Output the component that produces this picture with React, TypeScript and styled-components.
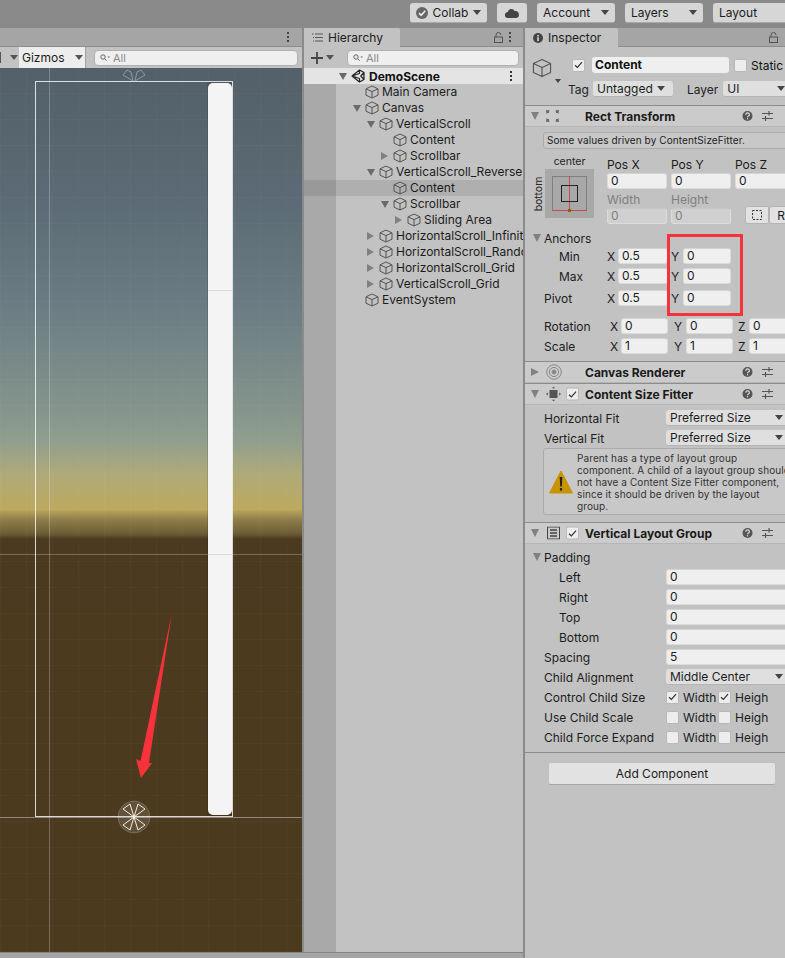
import React from 'react';
import styled, { createGlobalStyle } from 'styled-components';

const GlobalStyle = createGlobalStyle`
  html, body {
    margin: 0;
    padding: 0;
    width: 785px;
    height: 958px;
    overflow: hidden;
    background: #8a8a8a;
  }
  body {
    font-family: Inter, "Noto Sans", "Liberation Sans", sans-serif;
    font-size: 12px;
    color: #111;
  }
`;

const Editor = styled.div`
  width: 785px;
  height: 958px;
  display: flex;
  flex-direction: column;
  overflow: hidden;
`;

const TopBar = styled.div`
  height: 28px;
  flex: none;
  display: flex;
  justify-content: flex-end;
  align-items: flex-start;
  padding-top: 3px;
  box-sizing: border-box;
  gap: 10px;
  margin-right: -14px;
`;

const TopButton = styled.div<{ $w: number; $center?: boolean }>`
  width: ${p => p.$w}px;
  height: 20px;
  box-sizing: border-box;
  background: #d6d6d6;
  border-radius: 3px;
  border-bottom: 1px solid #a8a8a8;
  display: flex;
  align-items: center;
  justify-content: ${p => (p.$center ? 'center' : 'space-between')};
  padding: 0 6px;
  color: #1c1c1c;
`;

const Caret = styled.span<{ $c?: string }>`
  flex: none;
  width: 0;
  height: 0;
  border-left: 4px solid transparent;
  border-right: 4px solid transparent;
  border-top: 5px solid ${p => p.$c || '#444'};
`;

const Docks = styled.div`
  height: 930px;
  flex: none;
  display: flex;
  gap: 2px;
`;

const LeftDock = styled.div`
  width: 523px;
  flex: none;
  display: flex;
  flex-direction: column;
`;

const LeftPanels = styled.div`
  height: 924px;
  flex: none;
  display: flex;
  gap: 2px;
`;

const Panel = styled.div<{ $w: number }>`
  width: ${p => p.$w}px;
  flex: none;
  display: flex;
  flex-direction: column;
  overflow: hidden;
`;

const TabBar = styled.div`
  height: 18px;
  flex: none;
  background: #a5a5a5;
  display: flex;
  align-items: stretch;
  justify-content: flex-end;
  border-bottom: 1px solid #8c8c8c;
`;

const Tab = styled.div<{ $w: number }>`
  width: ${p => p.$w}px;
  height: 19px;
  margin-right: auto;
  background: #c2c2c2;
  display: flex;
  align-items: center;
  gap: 5px;
  padding-left: 8px;
  box-sizing: border-box;
  border-top-right-radius: 2px;
  color: #1c1c1c;
`;

const TabTools = styled.div<{ $r: number }>`
  display: flex;
  align-items: center;
  gap: 6px;
  padding-right: ${p => p.$r}px;
`;

const Dots = styled.span`
  width: 2px;
  height: 2px;
  background: #444;
  box-shadow: 0 -4px 0 #444, 0 4px 0 #444;
`;

const Search = styled.div`
  flex: 1;
  height: 16px;
  background: #efefef;
  border: 1px solid #b0b0b0;
  border-radius: 4px;
  box-sizing: border-box;
  display: flex;
  align-items: center;
  gap: 3px;
  padding-left: 5px;
  color: #8a8a8a;
  font-size: 11px;
`;

const SceneTools = styled.div`
  height: 21px;
  flex: none;
  background: #c2c2c2;
  display: flex;
  align-items: center;
  padding-right: 4px;
`;

const GizmoButton = styled.div`
  margin-left: 19px;
  width: 67px;
  height: 21px;
  box-sizing: border-box;
  background: #ededed;
  border-right: 1px solid #a0a0a0;
  display: flex;
  align-items: center;
  padding: 0 5px 0 3px;
  gap: 5px;
  margin-right: 8px;
  position: relative;
  color: #1c1c1c;
  &::before {
    content: '';
    position: absolute;
    left: -9px;
    top: 8px;
    border-left: 4px solid transparent;
    border-right: 4px solid transparent;
    border-top: 5px solid #555;
  }
  &::after {
    content: '';
    position: absolute;
    left: -19px;
    top: 5px;
    width: 1px;
    height: 11px;
    background: #555;
  }
`;

const GizmoSplit = styled.span`
  width: 1px;
  height: 12px;
  background: #999;
`;

const SceneView = styled.div`
  flex: 1;
  position: relative;
  background:
    repeating-linear-gradient(90deg, rgba(255, 255, 255, 0.025) 0 1px, transparent 1px 26px),
    repeating-linear-gradient(0deg, rgba(255, 255, 255, 0.025) 0 1px, transparent 1px 26px),
    linear-gradient(180deg, #536069 0, #5b6a74 130px, #6a7b83 233px, #82928b 333px, #8f9e8d 373px, #aeaa7a 405px, #bda95f 441px, #8e7c48 452px, #6f5f38 465px, #4c3a20 471px, #4c3a1f 100%);
  overflow: hidden;
`;

const Overlay = styled.svg`
  position: absolute;
  left: 0;
  top: 0;
`;

const Footer = styled.div`
  height: 6px;
  flex: none;
  background: #a5a5a5;
  border-top: 1px solid #858585;
  box-sizing: border-box;
`;

const HierarchyTools = styled.div`
  height: 21px;
  flex: none;
  background: #c2c2c2;
  display: flex;
  align-items: center;
  padding: 0 4px 0 7px;
  gap: 13px;
`;

const PlusButton = styled.div`
  display: flex;
  align-items: center;
  gap: 3px;
`;

const Tree = styled.div`
  flex: 1;
  background: linear-gradient(90deg, #a9a9a9 32px, #c2c2c2 32px);
  overflow: hidden;
`;

const SceneRow = styled.div`
  height: 16px;
  background: #e4e4e4;
  display: flex;
  align-items: center;
  padding-left: 35px;
  gap: 4px;
  font-weight: 700;
  color: #111;
  position: relative;
`;

const SceneDots = styled.span`
  position: absolute;
  right: 11px;
  top: 7px;
  width: 2px;
  height: 2px;
  background: #333;
  box-shadow: 0 -4px 0 #333, 0 4px 0 #333;
`;

const TreeRow = styled.div<{ $depth: number; $selected?: boolean }>`
  height: 16px;
  display: flex;
  align-items: center;
  padding-left: ${p => 61 + p.$depth * 14}px;
  background: ${p => (p.$selected ? 'rgba(0, 0, 0, 0.095)' : 'transparent')};
  white-space: nowrap;
  color: #1c1c1c;
`;

const TreeArrow = styled.span<{ $open?: boolean; $inline?: boolean }>`
  width: ${p => (p.$inline ? 'auto' : '12px')};
  margin-left: ${p => (p.$inline ? '0' : '-12px')};
  flex: none;
  display: flex;
  justify-content: flex-start;
  &::before {
    content: '';
    display: block;
    ${p =>
      p.$open
        ? `border-left: 4px solid transparent; border-right: 4px solid transparent; border-top: 7px solid #6a6a6a;`
        : `border-top: 4px solid transparent; border-bottom: 4px solid transparent; border-left: 7px solid #808080;`}
  }
`;

const TreeLabel = styled.span`
  margin: -2px 0 0 3px;
`;

const Inspector = styled(Panel)`
  background: #c2c2c2;
`;

const InspectorBody = styled.div`
  width: 280px;
  flex: 1;
  display: flex;
  flex-direction: column;
`;

const ObjectHead = styled.div`
  height: 59px;
  flex: none;
  box-sizing: border-box;
  border-bottom: 1px solid #8c8c8c;
  display: flex;
  padding: 10px 0 0 7px;
`;

const ObjectIconWrap = styled.div`
  width: 40px;
  flex: none;
  padding-top: 1px;
  position: relative;
  &::after {
    content: '';
    position: absolute;
    left: 23px;
    top: 22px;
    border-left: 3px solid transparent;
    border-right: 3px solid transparent;
    border-top: 4px solid #444;
  }
`;

const ObjectFields = styled.div`
  display: flex;
  flex-direction: column;
  gap: 8px;
`;

const NameRow = styled.div`
  display: flex;
  align-items: center;
  height: 16px;
`;

const TagRow = styled.div`
  display: flex;
  align-items: center;
  height: 16px;
  margin-left: -4px;
  color: #222;
`;

const LayerLabel = styled.span`
  margin-left: 14px;
`;

const Check = styled.span<{ $gap?: number }>`
  width: 13px;
  height: 13px;
  flex: none;
  box-sizing: border-box;
  background: #ededed;
  border: 1px solid #b8b8b8;
  border-radius: 2px;
  margin-right: ${p => p.$gap ?? 5}px;
  display: flex;
  align-items: center;
  justify-content: center;
`;

const NameField = styled.div`
  width: 137px;
  height: 16px;
  margin: 0 5px 0 3px;
  box-sizing: border-box;
  background: #efefef;
  border-radius: 3px;
  font-weight: 700;
  padding-left: 3px;
  line-height: 16px;
  flex: none;
`;

const Select = styled.div<{ $w: number; $ml?: number }>`
  width: ${p => p.$w}px;
  height: 16px;
  margin-left: ${p => p.$ml ?? 0}px;
  flex: none;
  box-sizing: border-box;
  background: #dfdfdf;
  border-radius: 3px;
  border-bottom: 1px solid #b4b4b4;
  display: flex;
  align-items: center;
  justify-content: space-between;
  padding: 0 8px 0 4px;
  color: #1c1c1c;
`;

const CompHead = styled.div`
  height: 21px;
  flex: none;
  box-sizing: border-box;
  background: #cbcbcb;
  border-bottom: 1px solid #b6b6b6;
  display: flex;
  align-items: center;
  position: relative;
  padding-left: 60px;
  font-weight: 700;
  color: #1a1a1a;
  white-space: nowrap;
`;

const HeadSlot = styled.span<{ $x: number }>`
  position: absolute;
  left: ${p => p.$x}px;
  top: 50%;
  transform: translateY(-50%);
  display: flex;
`;

const FoldArrow = styled.span<{ $open?: boolean }>`
  display: block;
  ${p =>
    p.$open
      ? `border-left: 4.5px solid transparent; border-right: 4.5px solid transparent; border-top: 8px solid #808080;`
      : `border-top: 4.5px solid transparent; border-bottom: 4.5px solid transparent; border-left: 8px solid #808080;`}
`;

const Note = styled.div`
  margin: 5px 0 6px 18px;
  height: 17px;
  box-sizing: border-box;
  border: 1px solid #ababab;
  border-radius: 3px;
  background: #c8c8c8;
  font-size: 10px;
  letter-spacing: 0.1px;
  line-height: 15px;
  padding-left: 3px;
  color: #222;
`;

const PosBlock = styled.div`
  display: flex;
  margin-left: 16px;
  height: 69px;
`;

const AnchorCol = styled.div`
  width: 66px;
  flex: none;
  position: relative;
`;

const AnchorCaption = styled.div`
  width: 57px;
  text-align: center;
  font-size: 10.5px;
  height: 14px;
  line-height: 14px;
  color: #222;
`;

const AnchorBottom = styled.span`
  position: absolute;
  left: -19px;
  top: 33px;
  transform: rotate(-90deg);
  font-size: 10.5px;
  line-height: 12px;
  color: #222;
`;

const AnchorBox = styled.div`
  width: 49px;
  height: 49px;
  margin-left: 4px;
  background: #a8a8a8;
`;

const PosGrid = styled.div`
  display: grid;
  grid-template-columns: repeat(3, 60px);
  column-gap: 4px;
  grid-template-rows: 18px 16px 19px 16px;
`;

const PosLabel = styled.div<{ $off?: boolean }>`
  color: ${p => (p.$off ? '#7f7f7f' : '#1c1c1c')};
  align-self: end;
  line-height: 15px;
  padding-bottom: 1px;
`;

const Field = styled.div<{ $w?: number; $off?: boolean }>`
  ${p => (p.$w ? `width: ${p.$w}px; flex: none;` : '')}
  height: 16px;
  box-sizing: border-box;
  background: ${p => (p.$off ? '#d0d0d0' : '#efefef')};
  color: ${p => (p.$off ? '#7f7f7f' : '#1c1c1c')};
  border-radius: 3px;
  border: 1px solid #dcdcdc;
  border-top-color: ${p => (p.$off ? '#c6c6c6' : '#d4d4d4')};
  line-height: 14px;
  padding-left: 3px;
`;

const RawButtons = styled.div`
  grid-column: 3;
  display: flex;
  margin-top: -2px;
  margin-left: 10px;
  height: 18px;
`;

const RawButton = styled.div<{ $w: number }>`
  width: ${p => p.$w}px;
  flex: none;
  box-sizing: border-box;
  background: #e2e2e2;
  border: 1px solid #b4b4b4;
  border-radius: 3px 0 0 3px;
  display: flex;
  align-items: center;
  justify-content: center;
  color: #1c1c1c;
`;

const FoldRow = styled.div<{ $top: number }>`
  height: 16px;
  display: flex;
  align-items: center;
  margin-top: ${p => p.$top}px;
  padding-left: 8px;
  gap: 3px;
  color: #1c1c1c;
`;

const Row = styled.div<{ $top?: number }>`
  height: 16px;
  display: flex;
  align-items: center;
  padding-left: 19px;
  margin-top: ${p => p.$top ?? 4}px;
  white-space: nowrap;
  color: #1c1c1c;
`;

const RowLabel = styled.span<{ $w: number; $indent?: number }>`
  width: ${p => p.$w}px;
  flex: none;
  padding-left: ${p => p.$indent ?? 0}px;
  box-sizing: border-box;
`;

const Axis = styled.span<{ $w: number; $ml?: number }>`
  width: ${p => p.$w}px;
  margin-left: ${p => p.$ml ?? 0}px;
  flex: none;
`;

const Warning = styled.div`
  margin: 2px 0 7px 18px;
  height: 67px;
  box-sizing: border-box;
  border: 1px solid #ababab;
  border-radius: 3px;
  background: #c8c8c8;
  display: flex;
  align-items: center;
  padding-left: 5px;
  color: #333;
`;

const WarningText = styled.div`
  margin-left: 4px;
  font-size: 10px;
  letter-spacing: 0.1px;
  line-height: 12px;
  white-space: nowrap;
  flex: none;
`;

const CheckLabel = styled.span<{ $w: number }>`
  width: ${p => p.$w}px;
  flex: none;
  margin-left: 4px;
`;

const Divider = styled.div<{ $top: number }>`
  height: 1px;
  margin-top: ${p => p.$top}px;
  width: 260px;
  background: #8c8c8c;
`;

const AddButton = styled.div`
  width: 228px;
  height: 23px;
  margin: 9px 0 0 23px;
  box-sizing: border-box;
  background: #e2e2e2;
  border: 1px solid #c0c0c0;
  border-bottom-color: #a8a8a8;
  border-radius: 3px;
  display: flex;
  align-items: center;
  justify-content: center;
  color: #1c1c1c;
`;

const RedFrame = styled.div`
  position: absolute;
  left: 142px;
  top: 187px;
  width: 76px;
  height: 82px;
  box-sizing: border-box;
  border: 3px solid #f5333a;
  pointer-events: none;
`;

const InspectorStage = styled.div`
  position: relative;
  flex: 1;
  display: flex;
  flex-direction: column;
`;

const IconSvg = styled.svg`
  flex: none;
  display: block;
`;

const CubeIcon = ({ size = 14 }: { size?: number }) => (
  <IconSvg width={size} height={size} viewBox="0 0 14 14" fill="none" stroke="#555" strokeWidth={size > 14 ? 0.8 : 1}>
    <path d="M7 1 L13 3.8 V10.2 L7 13 L1 10.2 V3.8 Z M1 3.8 L7 6.6 L13 3.8 M7 6.6 V13" strokeLinejoin="round" />
  </IconSvg>
);

const UnityIcon = () => (
  <IconSvg width="14" height="14" viewBox="0 0 14 14" fill="none" stroke="#222" strokeWidth="1.2">
    <path d="M8.5 1 L13 3.5 L13 10.5 L8.5 13 L1 7 Z M8.5 1 V4.5 L1 7 M8.5 13 V9.5 L1 7 M13 3.5 L9.8 7 L13 10.5" strokeLinejoin="round" />
  </IconSvg>
);

const CheckMark = () => (
  <svg width="9" height="8" viewBox="0 0 9 8" fill="none" stroke="#333" strokeWidth="1.2">
    <path d="M1 4.2 L3.4 6.5 L8 1.2" />
  </svg>
);

const MagIcon = () => (
  <IconSvg width="10" height="8" viewBox="0 0 10 8" fill="none" stroke="#666" strokeWidth="1">
    <circle cx="3" cy="3" r="2.2" />
    <path d="M4.6 4.6 L6.6 6.8" />
    <path d="M7.5 2.5 H10 L8.75 4 Z" fill="#666" stroke="none" />
  </IconSvg>
);

const LockIcon = () => (
  <svg width="9" height="11" viewBox="0 0 9 11" fill="none" stroke="#555" strokeWidth="1">
    <rect x="0.5" y="5" width="8" height="5.5" />
    <path d="M2 5 V3 A2.5 2.5 0 0 1 7 3" />
  </svg>
);

const HelpIcon = () => (
  <svg width="11" height="11" viewBox="0 0 11 11">
    <circle cx="5.5" cy="5.5" r="5" fill="#555" />
    <path d="M3.8 4.2 A1.8 1.7 0 1 1 6.2 5.7 Q5.5 6 5.5 6.8" fill="none" stroke="#ddd" strokeWidth="1.2" />
    <rect x="4.9" y="7.6" width="1.2" height="1.3" fill="#ddd" />
  </svg>
);

const PresetIcon = () => (
  <svg width="11" height="11" viewBox="0 0 11 11" stroke="#555" strokeWidth="1.2" fill="none">
    <path d="M0 3 H11 M0 8 H11" />
    <path d="M7 0.5 V5 M3.5 5.5 V10.5" />
  </svg>
);

const RectIcon = () => (
  <svg width="13" height="12" viewBox="0 0 13 12" fill="#666">
    <path d="M0 0 L4 0.6 L0.6 4 Z M13 0 L9 0.6 L12.4 4 Z M0 12 L4 11.4 L0.6 8 Z M13 12 L9 11.4 L12.4 8 Z" />
    <rect x="1" y="1" width="2" height="2" />
    <rect x="10" y="1" width="2" height="2" />
    <rect x="1" y="9" width="2" height="2" />
    <rect x="10" y="9" width="2" height="2" />
  </svg>
);

const RendererIcon = () => (
  <svg width="16" height="16" viewBox="0 0 16 16" fill="none" stroke="#888">
    <circle cx="8" cy="8" r="7.3" />
    <circle cx="8" cy="8" r="4.6" />
    <circle cx="8" cy="8" r="2" fill="#888" />
  </svg>
);

const FitterIcon = () => (
  <svg width="15" height="15" viewBox="0 0 15 15" fill="#555">
    <rect x="3.5" y="3.5" width="8" height="8" />
    <path d="M7.5 0 L9 1.8 H6 Z M7.5 15 L6 13.2 H9 Z M0 7.5 L1.8 6 V9 Z M15 7.5 L13.2 9 V6 Z" />
  </svg>
);

const LayoutIcon = () => (
  <svg width="13" height="13" viewBox="0 0 13 13" fill="none" stroke="#444">
    <rect x="0.5" y="0.5" width="12" height="12" />
    <path d="M3 3.5 H10 M3 6.5 H10 M3 9.5 H10" strokeWidth="1.4" />
  </svg>
);

const WarnIcon = () => (
  <IconSvg width="24" height="24" viewBox="0 0 24 24">
    <path d="M12 1 L23.5 23 H0.5 Z" fill="#c79400" stroke="#c79400" strokeLinejoin="round" />
    <path d="M10.7 7 H13.3 L12.8 16.5 H11.2 Z" fill="#222" />
    <rect x="10.9" y="18" width="2.2" height="2.6" fill="#222" />
  </IconSvg>
);

const CloudIcon = () => (
  <svg width="14" height="10" viewBox="0 0 14 10" fill="#444">
    <path d="M3 10 A3 3 0 0 1 2.8 4 A3.6 3.6 0 0 1 9.6 3 A3.5 3.5 0 1 1 11 10 Z" />
  </svg>
);

const CollabIcon = () => (
  <IconSvg width="12" height="12" viewBox="0 0 12 12">
    <circle cx="6" cy="6" r="6" fill="#666" />
    <path d="M3 6.2 L5.2 8.3 L9.2 3.8" fill="none" stroke="#eee" strokeWidth="1.6" />
  </IconSvg>
);

const InspectorTabIcon = () => (
  <IconSvg width="10" height="10" viewBox="0 0 10 10">
    <circle cx="5" cy="5" r="5" fill="#444" />
    <rect x="4.2" y="2" width="1.6" height="1.5" fill="#ddd" />
    <rect x="4.2" y="4.3" width="1.6" height="3.8" fill="#ddd" />
  </IconSvg>
);

const ListIcon = () => (
  <IconSvg width="11" height="9" viewBox="0 0 11 9" stroke="#555" fill="none">
    <path d="M3 1 H11 M3 4.5 H11 M3 8 H11 M0 1 H1.5 M1 4.5 H2 M1 8 H2" />
  </IconSvg>
);

const PlusIcon = () => (
  <svg width="12" height="12" viewBox="0 0 12 12" stroke="#444" strokeWidth="1.8">
    <path d="M6 0 V12 M0 6 H12" />
  </svg>
);

const AnchorWidget = () => (
  <IconSvg width="49" height="49" viewBox="0 0 49 49" fill="none">
    <rect x="7.5" y="7.5" width="34" height="34" stroke="#808080" />
    <path d="M7 41.5 H42" stroke="#c84a4a" />
    <path d="M24.5 7 V42" stroke="#c84a4a" />
    <rect x="16.5" y="16.5" width="16" height="16" stroke="#222" />
    <rect x="23" y="40" width="3" height="3" fill="#9a5a00" />
  </IconSvg>
);

const SceneGizmos = () => (
  <Overlay width="302" height="885" viewBox="0 67 302 885" fill="none">
    <path d="M49.5 67 V952" stroke="rgba(255,255,255,0.25)" />
    <path d="M0 816.5 H302" stroke="rgba(255,255,255,0.4)" />
    <path d="M0 553.5 H302" stroke="rgba(255,255,255,0.25)" />
    <rect x="207" y="80" width="26" height="735" fill="rgba(0,0,0,0.12)" />
    <rect x="208" y="82" width="24" height="732" rx="5" fill="#f4f4f4" />
    <path d="M208 289.5 H232 M208 553.5 H232" stroke="#d8d8d8" />
    <rect x="35.5" y="80.5" width="197" height="735" stroke="rgba(255,255,255,0.8)" />
    <path d="M133 80 L123 74 L127 69 L131 71 Z M135 80 L145 74 L141 69 L137 71 Z" stroke="#8d98a0" />
    <circle cx="134" cy="816" r="16" fill="rgba(255,255,255,0.12)" stroke="rgba(255,255,255,0.18)" />
    <path d="M134 816 L123 808 L130 803 Z M134 816 L145 808 L138 803 Z M134 816 L123 824 L130 829 Z M134 816 L145 824 L138 829 Z" stroke="#f2eee2" />
    <path d="M171.7 613 L149 762 L152 762 L141 777 L136 758 L140.5 760 Z" fill="#f8323a" />
  </Overlay>
);

const treeRows: { label: string; depth: number; arrow?: 'open' | 'closed'; selected?: boolean }[] = [
  { label: 'Main Camera', depth: 0 },
  { label: 'Canvas', depth: 0, arrow: 'open' },
  { label: 'VerticalScroll', depth: 1, arrow: 'open' },
  { label: 'Content', depth: 2 },
  { label: 'Scrollbar', depth: 2, arrow: 'closed' },
  { label: 'VerticalScroll_Reverse', depth: 1, arrow: 'open' },
  { label: 'Content', depth: 2, selected: true },
  { label: 'Scrollbar', depth: 2, arrow: 'open' },
  { label: 'Sliding Area', depth: 3, arrow: 'closed' },
  { label: 'HorizontalScroll_Infinite', depth: 1, arrow: 'closed' },
  { label: 'HorizontalScroll_Random', depth: 1, arrow: 'closed' },
  { label: 'HorizontalScroll_Grid', depth: 1, arrow: 'closed' },
  { label: 'VerticalScroll_Grid', depth: 1, arrow: 'closed' },
  { label: 'EventSystem', depth: 0 },
];

const ComponentHeader = ({
  icon,
  iconX,
  open,
  check,
  title,
}: {
  icon: React.ReactNode;
  iconX: number;
  open?: boolean;
  check?: boolean;
  title: string;
}) => (
  <CompHead>
    <HeadSlot $x={6}>
      <FoldArrow $open={open} />
    </HeadSlot>
    <HeadSlot $x={iconX}>{icon}</HeadSlot>
    {check && (
      <HeadSlot $x={41}>
        <Check $gap={0}>
          <CheckMark />
        </Check>
      </HeadSlot>
    )}
    {title}
    <HeadSlot $x={217}>
      <HelpIcon />
    </HeadSlot>
    <HeadSlot $x={237}>
      <PresetIcon />
    </HeadSlot>
  </CompHead>
);

const AnchorRow = ({ label, indent, top, x, y }: { label: string; indent?: number; top?: number; x: string; y: string }) => (
  <Row $top={top}>
    <RowLabel $w={63} $indent={indent}>{label}</RowLabel>
    <Axis $w={11}>X</Axis>
    <Field $w={50}>{x}</Field>
    <Axis $w={12} $ml={3}>Y</Axis>
    <Field $w={48}>{y}</Field>
  </Row>
);

const TripleRow = ({ label, top, v }: { label: string; top?: number; v: string }) => (
  <Row $top={top}>
    <RowLabel $w={66}>{label}</RowLabel>
    <Axis $w={11}>X</Axis>
    <Field $w={47}>{v}</Field>
    <Axis $w={12} $ml={6}>Y</Axis>
    <Field $w={47}>{v}</Field>
    <Axis $w={11} $ml={5}>Z</Axis>
    <Field $w={50}>{v}</Field>
  </Row>
);

const ValueRow = ({ label, indent, value, top }: { label: string; indent?: number; value: string; top?: number }) => (
  <Row $top={top}>
    <RowLabel $w={122} $indent={indent}>{label}</RowLabel>
    <Field $w={125}>{value}</Field>
  </Row>
);

const SelectRow = ({ label, value, top }: { label: string; value: string; top?: number }) => (
  <Row $top={top}>
    <RowLabel $w={122}>{label}</RowLabel>
    <Select $w={125}>
      {value}
      <Caret />
    </Select>
  </Row>
);

const CheckRow = ({ label, on }: { label: string; on?: boolean }) => (
  <Row>
    <RowLabel $w={122}>{label}</RowLabel>
    <Check $gap={0}>{on && <CheckMark />}</Check>
    <CheckLabel $w={35}>Width</CheckLabel>
    <Check $gap={0}>{on && <CheckMark />}</Check>
    <CheckLabel $w={40}>Heigh</CheckLabel>
  </Row>
);

export default function App() {
  return (
    <Editor>
      <GlobalStyle />
      <TopBar>
        <TopButton $w={77}>
          <CollabIcon />
          Collab
          <Caret />
        </TopButton>
        <TopButton $w={30} $center>
          <CloudIcon />
        </TopButton>
        <TopButton $w={78}>
          Account
          <Caret />
        </TopButton>
        <TopButton $w={78}>
          Layers
          <Caret />
        </TopButton>
        <TopButton $w={86}>
          Layout
          <Caret />
        </TopButton>
      </TopBar>
      <Docks>
        <LeftDock>
          <LeftPanels>
            <Panel $w={302}>
              <TabBar>
                <TabTools $r={13}>
                  <Dots />
                </TabTools>
              </TabBar>
              <SceneTools>
                <GizmoButton>
                  Gizmos
                  <GizmoSplit />
                  <Caret $c="#555" />
                </GizmoButton>
                <Search>
                  <MagIcon />
                  All
                </Search>
              </SceneTools>
              <SceneView>
                <SceneGizmos />
              </SceneView>
            </Panel>
            <Panel $w={219}>
              <TabBar>
                <Tab $w={96}>
                  <ListIcon />
                  Hierarchy
                </Tab>
                <TabTools $r={12}>
                  <LockIcon />
                  <Dots />
                </TabTools>
              </TabBar>
              <HierarchyTools>
                <PlusButton>
                  <PlusIcon />
                  <Caret $c="#555" />
                </PlusButton>
                <Search>
                  <MagIcon />
                  All
                </Search>
              </HierarchyTools>
              <Tree>
                <SceneRow>
                  <TreeArrow $open $inline />
                  <UnityIcon />
                  DemoScene
                  <SceneDots />
                </SceneRow>
                {treeRows.map((r, i) => (
                  <TreeRow key={i} $depth={r.depth} $selected={r.selected}>
                    {r.arrow && <TreeArrow $open={r.arrow === 'open'} />}
                    <CubeIcon />
                    <TreeLabel>{r.label}</TreeLabel>
                  </TreeRow>
                ))}
              </Tree>
            </Panel>
          </LeftPanels>
          <Footer />
        </LeftDock>
        <Inspector $w={260}>
          <TabBar>
            <Tab $w={93}>
              <InspectorTabIcon />
              Inspector
            </Tab>
            <TabTools $r={7}>
              <LockIcon />
            </TabTools>
          </TabBar>
          <InspectorStage>
            <InspectorBody>
              <ObjectHead>
                <ObjectIconWrap>
                  <CubeIcon size={20} />
                </ObjectIconWrap>
                <ObjectFields>
                  <NameRow>
                    <Check $gap={4}>
                      <CheckMark />
                    </Check>
                    <NameField>Content</NameField>
                    <Check $gap={4} />
                    Static
                  </NameRow>
                  <TagRow>
                    Tag
                    <Select $w={80} $ml={4}>
                      Untagged
                      <Caret />
                    </Select>
                    <LayerLabel>Layer</LayerLabel>
                    <Select $w={70} $ml={5}>
                      UI
                      <Caret />
                    </Select>
                  </TagRow>
                </ObjectFields>
              </ObjectHead>
              <ComponentHeader icon={<RectIcon />} iconX={21} open title="Rect Transform" />
              <Note>Some values driven by ContentSizeFitter.</Note>
              <PosBlock>
                <AnchorCol>
                  <AnchorCaption>center</AnchorCaption>
                  <AnchorBottom>bottom</AnchorBottom>
                  <AnchorBox>
                    <AnchorWidget />
                  </AnchorBox>
                </AnchorCol>
                <PosGrid>
                  <PosLabel>Pos X</PosLabel>
                  <PosLabel>Pos Y</PosLabel>
                  <PosLabel>Pos Z</PosLabel>
                  <Field>0</Field>
                  <Field>0</Field>
                  <Field>0</Field>
                  <PosLabel $off>Width</PosLabel>
                  <PosLabel $off>Height</PosLabel>
                  <span />
                  <Field $off>0</Field>
                  <Field $off>0</Field>
                  <RawButtons>
                    <RawButton $w={24}>
                      <svg width="10" height="10" viewBox="0 0 10 10" fill="none" stroke="#333" strokeDasharray="2 1.5">
                        <rect x="0.5" y="0.5" width="9" height="9" />
                      </svg>
                    </RawButton>
                    <RawButton $w={24}>R</RawButton>
                  </RawButtons>
                </PosGrid>
              </PosBlock>
              <FoldRow $top={6}>
                <FoldArrow $open />
                Anchors
              </FoldRow>
              <AnchorRow label="Min" indent={15} top={2} x="0.5" y="0" />
              <AnchorRow label="Max" indent={15} x="0.5" y="0" />
              <AnchorRow label="Pivot" top={6} x="0.5" y="0" />
              <TripleRow label="Rotation" top={12} v="0" />
              <TripleRow label="Scale" v="1" />
              <Divider $top={7} />
              <ComponentHeader icon={<RendererIcon />} iconX={21} title="Canvas Renderer" />
              <Divider $top={0} />
              <ComponentHeader icon={<FitterIcon />} iconX={21} open check title="Content Size Fitter" />
              <SelectRow label="Horizontal Fit" value="Preferred Size" top={5} />
              <SelectRow label="Vertical Fit" value="Preferred Size" />
              <Warning>
                <WarnIcon />
                <WarningText>
                  Parent has a type of layout group
                  <br />
                  component. A child of a layout group should
                  <br />
                  not have a Content Size Fitter component,
                  <br />
                  since it should be driven by the layout
                  <br />
                  group.
                </WarningText>
              </Warning>
              <Divider $top={0} />
              <ComponentHeader icon={<LayoutIcon />} iconX={22} open check title="Vertical Layout Group" />
              <FoldRow $top={5}>
                <FoldArrow $open />
                Padding
              </FoldRow>
              <ValueRow label="Left" indent={15} value="0" />
              <ValueRow label="Right" indent={15} value="0" />
              <ValueRow label="Top" indent={15} value="0" />
              <ValueRow label="Bottom" indent={15} value="0" />
              <ValueRow label="Spacing" value="5" />
              <SelectRow label="Child Alignment" value="Middle Center" />
              <CheckRow label="Control Child Size" on />
              <CheckRow label="Use Child Scale" />
              <CheckRow label="Child Force Expand" />
              <Divider $top={7} />
              <AddButton>Add Component</AddButton>
            </InspectorBody>
            <RedFrame />
          </InspectorStage>
        </Inspector>
      </Docks>
    </Editor>
  );
}
